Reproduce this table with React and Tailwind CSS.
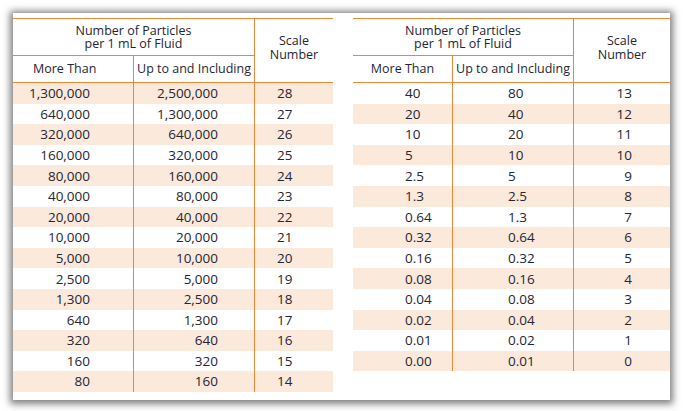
// Particle count scale table — two side-by-side tables in a shadowed card.
const LINE = "border-[#e8893a]";

const left = [
  ["1,300,000", "2,500,000", "28"],
  ["640,000", "1,300,000", "27"],
  ["320,000", "640,000", "26"],
  ["160,000", "320,000", "25"],
  ["80,000", "160,000", "24"],
  ["40,000", "80,000", "23"],
  ["20,000", "40,000", "22"],
  ["10,000", "20,000", "21"],
  ["5,000", "10,000", "20"],
  ["2,500", "5,000", "19"],
  ["1,300", "2,500", "18"],
  ["640", "1,300", "17"],
  ["320", "640", "16"],
  ["160", "320", "15"],
  ["80", "160", "14"],
];

const right = [
  ["40", "80", "13"],
  ["20", "40", "12"],
  ["10", "20", "11"],
  ["5", "10", "10"],
  ["2.5", "5", "9"],
  ["1.3", "2.5", "8"],
  ["0.64", "1.3", "7"],
  ["0.32", "0.64", "6"],
  ["0.16", "0.32", "5"],
  ["0.08", "0.16", "4"],
  ["0.04", "0.08", "3"],
  ["0.02", "0.04", "2"],
  ["0.01", "0.02", "1"],
  ["0.00", "0.01", "0"],
];

// w: [table, cols1+2, col1, col2, col3]
function Table({ rows, w, cells, shadeOdd, moreCls }) {
  return (
    <div className={w[0]}>
      <div className={`flex border-t border-b ${LINE}`}>
        <div className={`flex flex-col ${w[1]}`}>
          <div className={`h-[37px] border-b ${LINE} flex flex-col items-center justify-center leading-[13.5px]`}>
            <span>Number of Particles</span>
            <span>per 1 mL of Fluid</span>
          </div>
          <div className="flex h-[26px]">
            <div className={`flex items-center ${w[2]} ${moreCls}`}>More Than</div>
            <div className={`flex items-center justify-center border-l ${LINE} ${w[3]}`}>Up to and Including</div>
          </div>
        </div>
        <div className={`flex flex-col items-center justify-center leading-[14px] border-l ${LINE} pb-[6px] ${w[4]}`}>
          <span>Scale</span>
          <span>Number</span>
        </div>
      </div>
      {rows.map((r, i) => {
        const shaded = shadeOdd ? i % 2 === 0 : i % 2 === 1;
        return (
          <div key={i} className={`flex h-[20.6px] text-[13.5px] ${shaded ? "bg-[#fbe9db]" : ""}`}>
            <div className={`flex items-center ${w[2]} ${cells[0]}`}>{r[0]}</div>
            <div className={`flex items-center border-l ${LINE} ${w[3]} ${cells[1]}`}>{r[1]}</div>
            <div className={`flex items-center border-l ${LINE} ${w[4]} ${cells[2]}`}>{r[2]}</div>
          </div>
        );
      })}
    </div>
  );
}

export default function App() {
  return (
    <div className="w-[684px] h-[411px] bg-white pt-[13px] pl-[13px] text-[12.5px] text-[#262633] font-['Open_Sans','Noto_Sans',sans-serif]">
      <div className="w-[657px] h-[387px] bg-white shadow-[0px_1px_7px_3px_rgba(0,0,0,0.5)] pt-[5px] flex gap-[20px]">
        <Table
          rows={left}
          w={["w-[320px]", "w-[241px]", "w-[120px]", "w-[121px]", "w-[79px]"]}
          shadeOdd
          moreCls="pl-[20px]"
          cells={["justify-end pr-[43px]", "justify-end pr-[36px]", "pl-[22px]"]}
        />
        <Table
          rows={right}
          w={["w-[317px]", "w-[220px]", "w-[99px]", "w-[121px]", "w-[97px]"]}
          moreCls="justify-center"
          cells={["pl-[52px]", "pl-[55px]", "justify-end pr-[38px]"]}
        />
      </div>
    </div>
  );
}
